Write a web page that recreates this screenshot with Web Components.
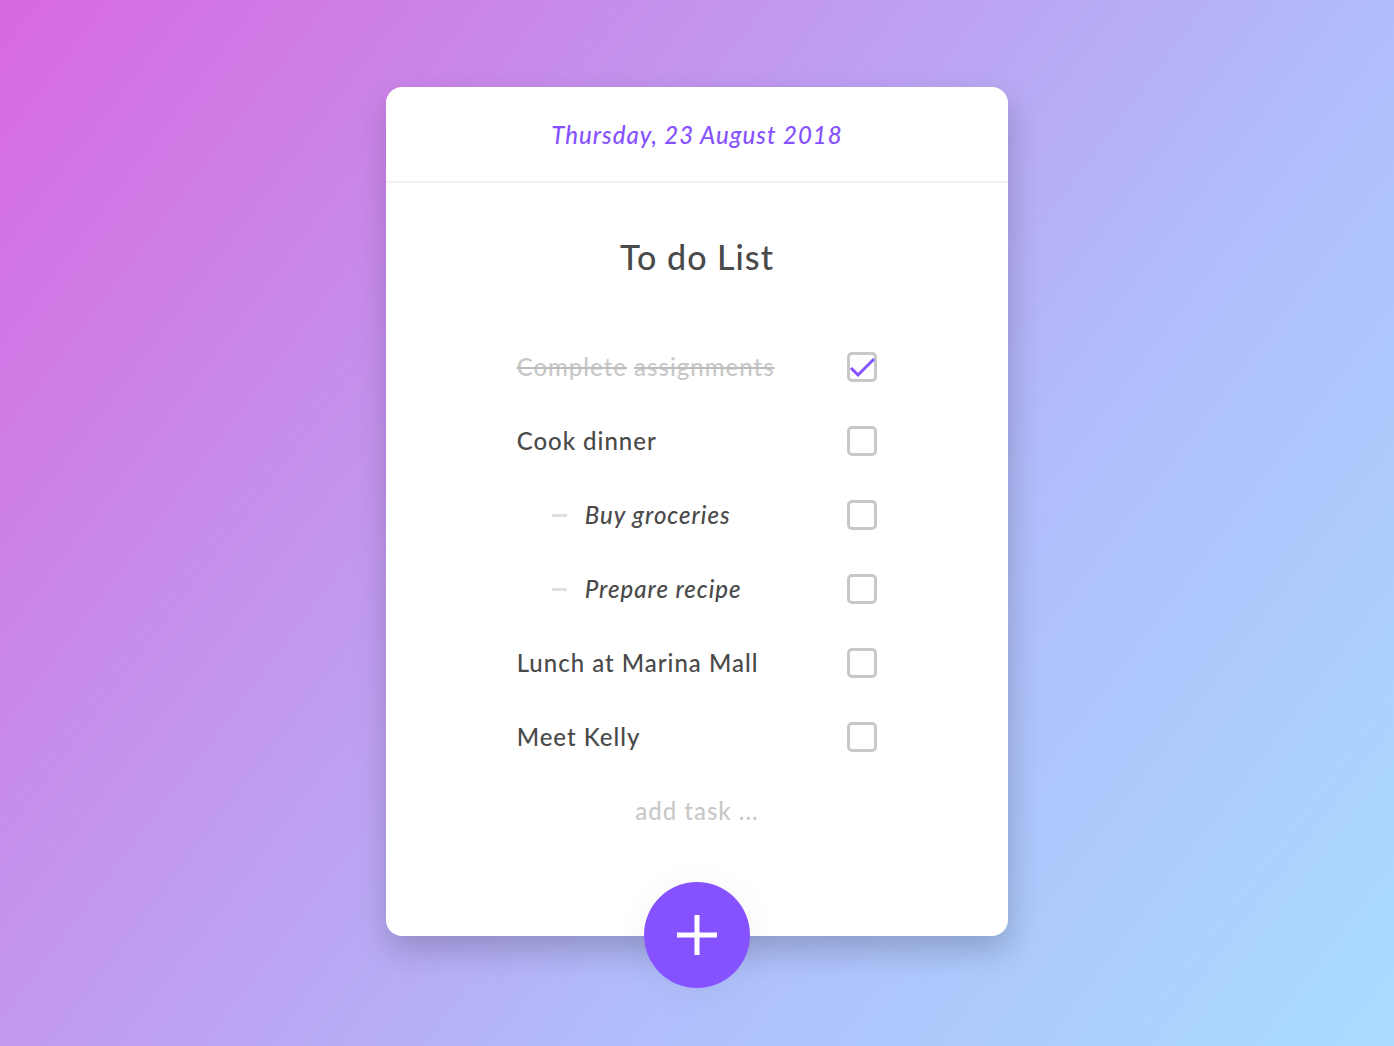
<!DOCTYPE html>
<html lang="en">
<head>
<meta charset="utf-8">
<meta name="viewport" content="width=device-width, initial-scale=1">
<title>To do List</title>
<style>
  * { box-sizing: border-box; }
  body {
    margin: 0;
    min-height: 100vh;
    padding: 87px 16px 110px;
    background: linear-gradient(127deg, #d868e0 0%, #b0befb 65%, #a9dcff 100%);
    font-family: Lato, "Liberation Sans", sans-serif;
    font-size: 24px;
    font-weight: 500;
    line-height: 32px;
    letter-spacing: 1px;
    color: #4a4a4a;
  }
  time { font-style: italic; }
</style>
</head>
<body>
<todo-card>
  <time slot="date" datetime="2018-08-23">Thursday, 23 August 2018</time>
  <span slot="title">To do List</span>
  <todo-item done><s>Complete</s> <s>assignments</s></todo-item>
  <todo-item>Cook dinner</todo-item>
  <todo-item sub>Buy groceries</todo-item>
  <todo-item sub>Prepare recipe</todo-item>
  <todo-item>Lunch at Marina Mall</todo-item>
  <todo-item>Meet Kelly</todo-item>
  <add-task slot="add"></add-task>
  <fab-button slot="action"></fab-button>
</todo-card>

<script>
class TodoCard extends HTMLElement {
  constructor() {
    super();
    this.attachShadow({ mode: "open" }).innerHTML = `
      <style>
        * { box-sizing: border-box; }
        :host {
          display: block;
          position: relative;
          max-width: 622px;
          margin: 0 auto;
          padding-bottom: 88px;
          border-radius: 16px;
          background: #fff;
          box-shadow: 2px 14px 32px rgba(0, 0, 0, .2);
        }
        header {
          padding: 32px 16px 30px;
          border-bottom: 2px solid #f1f1f1;
          color: #8652ff;
          text-align: center;
        }
        h1 {
          margin: 0;
          padding: 52px 16px 51px;
          font-size: 34px;
          line-height: 44px;
          font-weight: 500;
          text-align: center;
        }
        .list { width: 58%; margin: 0 auto; }
        .action {
          position: absolute;
          left: 0;
          right: 0;
          bottom: -52px;
          display: flex;
          justify-content: center;
          pointer-events: none;
        }
      </style>
      <header><slot name="date"></slot></header>
      <h1><slot name="title"></slot></h1>
      <div class="list" role="list"><slot></slot></div>
      <slot name="add"></slot>
      <div class="action"><slot name="action"></slot></div>
    `;
  }
}

class TodoItem extends HTMLElement {
  constructor() {
    super();
    this.attachShadow({ mode: "open" }).innerHTML = `
      <style>
        * { box-sizing: border-box; }
        :host {
          display: flex;
          align-items: center;
          min-height: 74px;
        }
        label { flex: 1; cursor: pointer; }
        :host([sub]) { font-style: italic; }
        :host([sub])::before {
          content: "";
          width: 15px;
          height: 3px;
          margin: 0 18px 0 35px;
          background: #e0e0e0;
        }
        :host([done]) label { color: #c8c8c8; }
        ::slotted(s) { text-decoration: none; }
        :host([done]) ::slotted(s) { text-decoration: line-through 2px #bcbcbc; }
        .box { display: grid; width: 30px; height: 30px; }
        input, svg { grid-area: 1 / 1; width: 30px; height: 30px; }
        input {
          appearance: none;
          margin: 0;
          border: 3px solid #c8c8c8;
          border-radius: 5px;
          background: #fff;
          cursor: pointer;
        }
        svg { visibility: hidden; pointer-events: none; position: relative; }
        input:checked + svg { visibility: visible; }
      </style>
      <label for="check"><slot></slot></label>
      <span class="box">
        <input id="check" type="checkbox">
        <svg viewBox="0 0 30 30" fill="none" stroke="#8652ff" stroke-width="3" aria-hidden="true">
          <path d="M4 16l7 7L27 7"/>
        </svg>
      </span>
    `;
  }

  connectedCallback() {
    this.setAttribute("role", "listitem");
    const input = this.shadowRoot.querySelector("input");
    input.checked = this.hasAttribute("done");
    input.addEventListener("change", () => this.toggleAttribute("done", input.checked));
  }
}

class AddTask extends HTMLElement {
  constructor() {
    super();
    this.attachShadow({ mode: "open" }).innerHTML = `
      <style>
        :host { display: flex; justify-content: center; align-items: center; min-height: 74px; }
        input {
          width: 58%;
          border: 0;
          padding: 0;
          outline: 0;
          background: none;
          font: inherit;
          letter-spacing: inherit;
          color: inherit;
          text-align: center;
        }
        input::placeholder { color: #c8c8c8; opacity: 1; }
      </style>
      <input type="text" placeholder="add task ..." aria-label="Add task">
    `;
  }
}

class FabButton extends HTMLElement {
  constructor() {
    super();
    this.attachShadow({ mode: "open" }).innerHTML = `
      <style>
        :host { display: block; pointer-events: auto; }
        button {
          display: grid;
          place-items: center;
          width: 106px;
          height: 106px;
          padding: 0;
          border: 0;
          border-radius: 50%;
          background: #8652ff;
          box-shadow: 0 4px 36px rgba(0, 0, 0, .05);
          cursor: pointer;
        }
        svg { width: 40px; height: 40px; }
      </style>
      <button type="button" aria-label="Add">
        <svg viewBox="0 0 40 40" stroke="#fff" stroke-width="5" aria-hidden="true">
          <path d="M20 0v40M0 20h40"/>
        </svg>
      </button>
    `;
  }
}

customElements.define("todo-card", TodoCard);
customElements.define("todo-item", TodoItem);
customElements.define("add-task", AddTask);
customElements.define("fab-button", FabButton);
</script>
</body>
</html>
